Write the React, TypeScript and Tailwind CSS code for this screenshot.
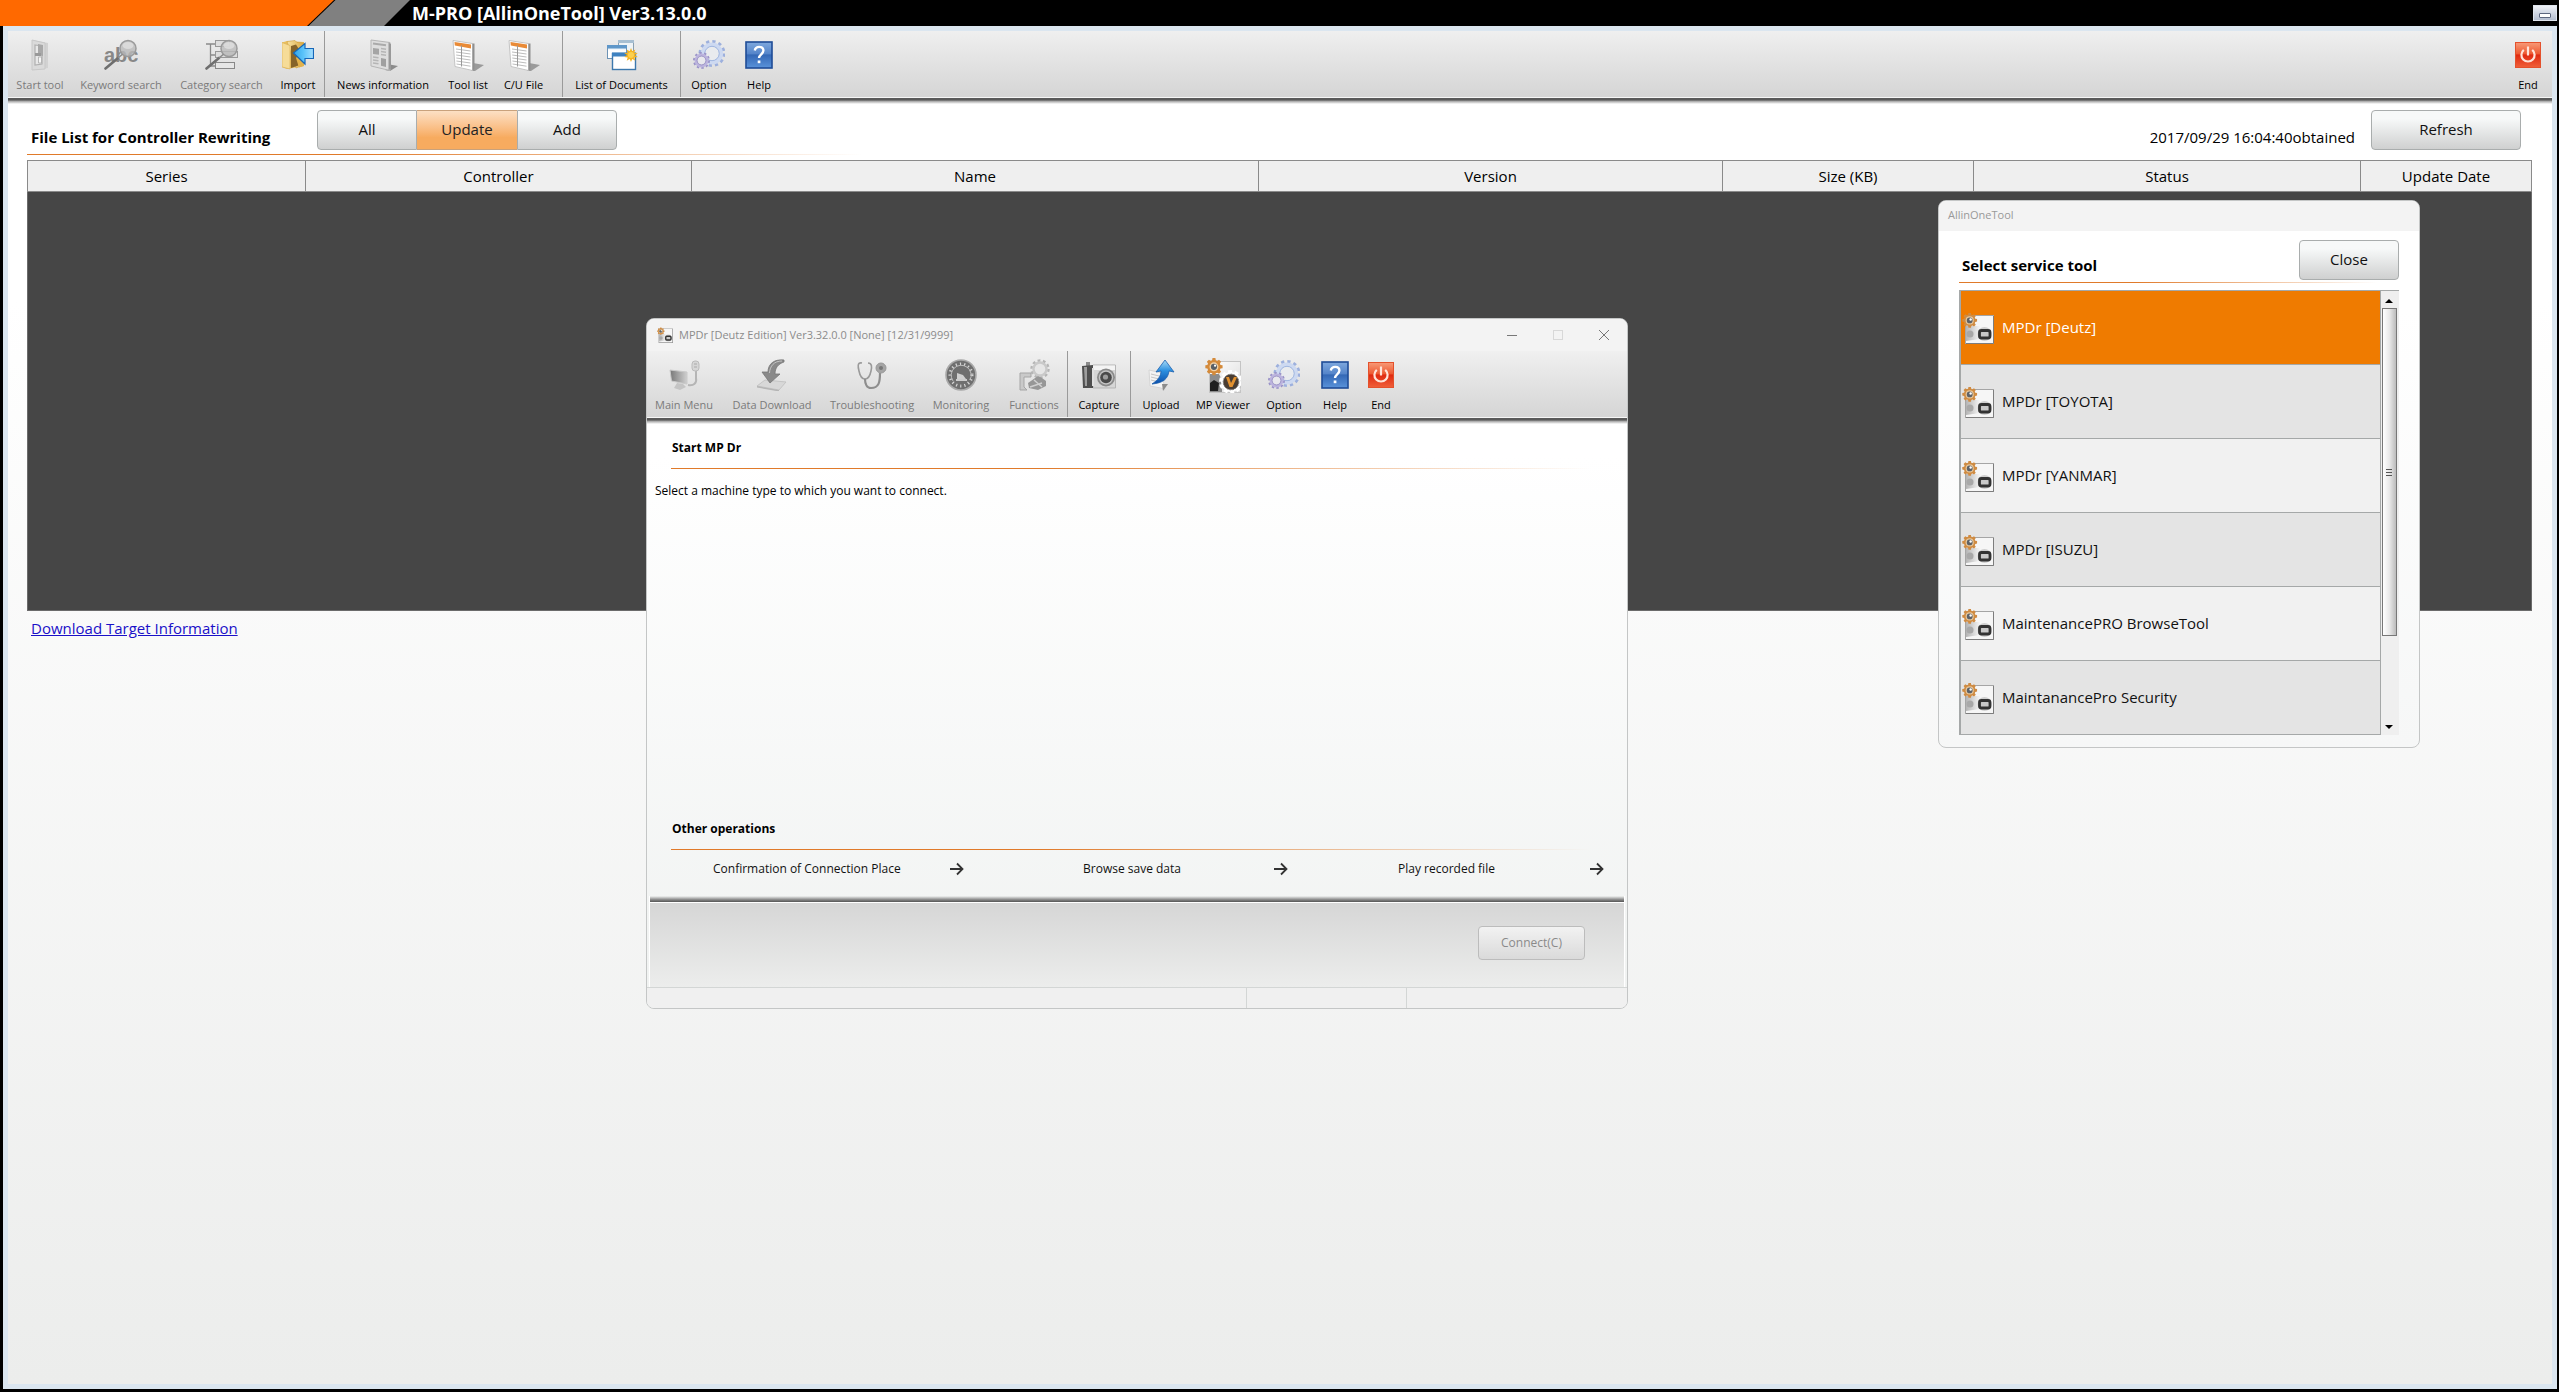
import type { ReactNode } from "react";

const GEAR =
  "M13.4 2h5.2l.7 3.7 2.6 1.1 3.1-2.1 3.7 3.7-2.1 3.1 1.1 2.6 3.7.7v5.2l-3.7.7-1.1 2.6 2.1 3.1-3.7 3.7-3.1-2.1-2.6 1.1-.7 3.7h-5.2l-.7-3.7-2.6-1.1L7 30.1l-3.7-3.7 2.1-3.1-1.1-2.6L.6 20v-5.2l3.7-.7 1.1-2.6-2.1-3.1L7 4.700l3.1 2.100 2.600-1.100z";

function Svg({ children }: { children: ReactNode }) {
  return (
    <svg className="size-8 shrink-0" viewBox="0 0 32 32" aria-hidden="true">
      {children}
    </svg>
  );
}

const Defs = () => (
  <svg className="absolute size-0" aria-hidden="true">
    <defs>
      <linearGradient id="gBlue" x1="0" y1="0" x2="0" y2="1">
        <stop offset="0" stopColor="#7fa9de" />
        <stop offset="0.45" stopColor="#5585ca" />
        <stop offset="0.5" stopColor="#3468b6" />
        <stop offset="1" stopColor="#5a93da" />
      </linearGradient>
      <linearGradient id="gRed" x1="0" y1="0" x2="0" y2="1">
        <stop offset="0" stopColor="#f79a78" />
        <stop offset="0.45" stopColor="#ee5a32" />
        <stop offset="0.5" stopColor="#e02a10" />
        <stop offset="1" stopColor="#f0603a" />
      </linearGradient>
      <linearGradient id="gArrow" x1="0" y1="0" x2="1" y2="0">
        <stop offset="0" stopColor="#2fa4ea" />
        <stop offset="0.5" stopColor="#5cc4fa" />
        <stop offset="1" stopColor="#a8e0ff" />
      </linearGradient>
      <linearGradient id="gUp" x1="0" y1="0" x2="0" y2="1">
        <stop offset="0" stopColor="#a9dcf7" />
        <stop offset="0.45" stopColor="#2b8fe0" />
        <stop offset="1" stopColor="#0c4da8" />
      </linearGradient>
      <linearGradient id="gFolder" x1="0" y1="0" x2="1" y2="0">
        <stop offset="0" stopColor="#f8e3a4" />
        <stop offset="1" stopColor="#d9a740" />
      </linearGradient>
      <linearGradient id="gWin" x1="0" y1="0" x2="0" y2="1">
        <stop offset="0" stopColor="#c9def0" />
        <stop offset="0.4" stopColor="#ffffff" />
      </linearGradient>
      <linearGradient id="gCard" x1="0" y1="0" x2="1" y2="1">
        <stop offset="0" stopColor="#ffffff" />
        <stop offset="1" stopColor="#dcdcdc" />
      </linearGradient>
      <linearGradient id="gShade" x1="0" y1="0" x2="1" y2="0">
        <stop offset="0" stopColor="#777777" />
        <stop offset="1" stopColor="#cfcfcf" />
      </linearGradient>
      <linearGradient id="gSide" x1="0" y1="0" x2="1" y2="0">
        <stop offset="0" stopColor="#b4b4b4" />
        <stop offset="1" stopColor="#f6f6f6" />
      </linearGradient>
    </defs>
  </svg>
);

const StartToolIcon = () => (
  <Svg>
    <path d="M8 1l16 3v25l-16 2z" fill="#d2d2d2" />
    <path d="M8 1l13 3v26l-13 1z" fill="#dadada" stroke="#c8c8c8" />
    <path d="M11 6l7 1v18l-7 1z" fill="#e8e8e8" stroke="#b0b0b0" strokeWidth="1.200" />
    <path d="M14 5l5 1v11l-5-1z" fill="#a8a8a8" />
    <path d="M11 14h6v3h-6z" fill="#999" />
    <path d="M14.500 18h3v6h-3z" fill="#f5f5f5" stroke="#aaa" strokeWidth="0.800" />
  </Svg>
);

const Magnifier = () => (
  <>
    <path d="M1.500 29.500L14 19" stroke="#6f6f6f" strokeWidth="2.600" strokeLinecap="round" />
    <circle cx="24" cy="9.500" r="8" fill="#b9b9b9" fillOpacity="0.800" stroke="#9a9a9a" strokeWidth="1.500" />
    <ellipse cx="24" cy="6.500" rx="5.500" ry="3.500" fill="#e0e0e0" fillOpacity="0.800" />
    <path d="M14 19l4.500-3.800" stroke="#8a8a8a" strokeWidth="1.500" />
  </>
);

const KeywordIcon = () => (
  <svg className="h-8 w-[34px] shrink-0" viewBox="0 0 34 32" aria-hidden="true">
    <text x="0" y="23" fontSize="20" fontWeight="700" fontFamily="Liberation Sans, sans-serif" fill="#888">
      abc
    </text>
    <Magnifier />
  </svg>
);

const CategoryIcon = () => (
  <svg className="h-8 w-[34px] shrink-0" viewBox="0 0 34 32" aria-hidden="true">
    <path d="M1 5h9M5.500 5v22h5M5.500 16h5" fill="none" stroke="#8a8a8a" strokeWidth="1.300" />
    <rect x="10.500" y="1.500" width="14" height="6" fill="#ddd" stroke="#999" />
    <rect x="10.500" y="12.500" width="22" height="6" fill="#ddd" stroke="#999" />
    <rect x="10.500" y="23.500" width="19" height="6" fill="#e6e6e6" stroke="#888" />
    <Magnifier />
  </svg>
);

const ImportIcon = () => (
  <Svg>
    <path d="M0 3.500l5-1.500 17 1v24l-17 3-5-2z" fill="#eabf5c" />
    <path d="M5 2.500l8-1 2 2 7 .5v22l-8 3z" fill="url(#gFolder)" stroke="#cf9f43" strokeWidth="0.600" />
    <path d="M0 3.500l8 3v23.500l-8-2z" fill="#f6dc98" stroke="#d9ac52" strokeWidth="0.600" />
    <path d="M9 7l5-1.500 2.500 4v17L9 29z" fill="#86642a" />
    <path d="M14 19l3-4 5 6v6l-5 1.500z" fill="#e2b24c" />
    <path d="M11.500 14L23 4.500V9.500h8.500v10H23V25z" fill="url(#gArrow)" stroke="#1767b8" strokeWidth="1.200" />
  </Svg>
);

const NewsIcon = () => (
  <Svg>
    <path d="M20 25l11 2-8 5-5-1z" fill="#8b8b8b" />
    <path d="M4 1l19 2.500v28L4 27z" fill="#dedede" stroke="#b5b5b5" />
    <path d="M21.500 3.500L24 5v25l-2.500 1z" fill="#999" />
    <path d="M6 4.500l13 1.700" stroke="#aaa" strokeWidth="2" />
    <path d="M6 9l6 .8v6L6 15z" fill="#a5a5a5" />
    <path
      d="M14 9.500l5 .7M14 12.500l5 .7M14 15.500l5 .7M6 18l5.500.8M6 21l5.500.8M6 24l5.500.8"
      stroke="#b5b5b5"
      strokeWidth="1.400"
    />
    <path d="M14 19l5 1v8l-5-1.200z" fill="#a0a0a0" />
  </Svg>
);

const ListIcon = () => (
  <Svg>
    <path d="M21 24l11 2-9 6h-4z" fill="#9a9a9a" />
    <path d="M1 1.500l19.500 3v27L3 27.500z" fill="#fff" stroke="#c4c4c4" />
    <path d="M20.500 4.500h2V30l-2 1.500z" fill="#8f8f8f" />
    <path d="M2.500 3l16.500 2.500v4L2.800 6.500z" fill="#e98a36" />
    <path
      d="M4 10l14.500 2M4 13l14.500 2M4.200 16l14.300 2M4.300 19l14.200 2M4.400 22l14 2M4.500 25l14 2.200"
      stroke="#bdbdbd"
    />
    <path d="M9.500 6.500v21" stroke="#999" />
  </Svg>
);

const DocumentsIcon = () => (
  <Svg>
    <rect x="12.500" y="1.500" width="15" height="11" fill="#eef3f6" stroke="#8aa0b0" />
    <rect x="12" y="1" width="16" height="3" fill="#a7bfd2" />
    <rect x="1.500" y="6.500" width="19" height="13" fill="url(#gWin)" stroke="#6d93b5" />
    <rect x="1" y="6" width="20" height="3.500" fill="#5f97c9" />
    <rect x="6.500" y="14.500" width="23" height="16" fill="#fff" stroke="#3c78ad" strokeWidth="1.400" />
    <rect x="6" y="13.500" width="24" height="4" fill="#3f82c0" />
    <path
      d="M25 9l1.300 3.200 3-1.800-1 3.300 3.500.3-3 2 3 2-3.500.5 1 3.300-3-1.800L25 23l-1.300-3-3 1.800 1-3.300-3.500-.5 3-2-3-2 3.500-.3-1-3.300 3 1.800z"
      fill="#f6b421"
    />
    <circle cx="25" cy="16" r="3" fill="#fbd04e" />
  </Svg>
);

const OptionIcon = () => (
  <Svg>
    <circle cx="19" cy="14.500" r="12" fill="none" stroke="#9db0dd" strokeWidth="3" strokeDasharray="3.200 3.080" />
    <circle cx="19" cy="14.500" r="9" fill="none" stroke="#cdd9f1" strokeWidth="4" />
    <circle cx="19" cy="14.500" r="7.200" fill="#e9ebee" stroke="#8ea8da" strokeWidth="0.800" />
    <circle cx="8.500" cy="21.500" r="7.500" fill="none" stroke="#9a93c8" strokeWidth="2" strokeDasharray="2.400 2.310" />
    <circle cx="8.500" cy="21.500" r="5.600" fill="none" stroke="#bcb4de" strokeWidth="2.600" />
    <circle cx="8.500" cy="21.500" r="4.400" fill="#e8e8ed" stroke="#8d84bd" strokeWidth="0.800" />
  </Svg>
);

const HelpIcon = () => (
  <Svg>
    <rect x="3" y="3" width="26" height="26" fill="url(#gBlue)" stroke="#1f4c96" strokeWidth="1.600" />
    <path
      d="M11.800 11.500c.4-2.400 2.100-3.600 4.400-3.600 2.400 0 4.200 1.400 4.200 3.700 0 3.600-4.400 3.800-4.400 7.400"
      fill="none"
      stroke="#fff"
      strokeWidth="2.400"
    />
    <rect x="14.700" y="21.500" width="2.700" height="2.700" fill="#fff" />
  </Svg>
);

const EndIcon = () => (
  <Svg>
    <rect x="3.500" y="3.500" width="25" height="25" fill="url(#gRed)" stroke="#e4512c" />
    <path d="M11.800 10.800a6.600 6.600 0 1 0 8.400 0" fill="none" stroke="#ffe4da" strokeWidth="2.200" />
    <path d="M16 7.500v9" stroke="#ffe4da" strokeWidth="2.200" />
  </Svg>
);

const MainMenuIcon = () => (
  <Svg>
    <path d="M2 11l17 2v12L3.500 22z" fill="url(#gShade)" stroke="#c9c9c9" />
    <path d="M9 24l6 1 3 3-6 3-6-2z" fill="#c4c4c4" />
    <path d="M20 26c6 1 9-2 8-7V11" fill="none" stroke="#b5b5b5" strokeWidth="2" />
    <rect x="24" y="2" width="7" height="10" rx="3" fill="#d6d6d6" stroke="#bbb" />
    <path d="M26 5h3M26 8h3" stroke="#aaa" />
  </Svg>
);

const DownloadIcon = () => (
  <Svg>
    <path d="M1 27l8-6 21 2-7 8z" fill="#d8d8d8" stroke="#c4c4c4" />
    <path d="M1 27l22 4v1.500L1 28.500z" fill="#b5b5b5" />
    <path d="M28 1C18 0 12 5 12 13H6l8 11 10-9h-5c0-6 3-10 9-12z" fill="#8a8a8a" stroke="#777" strokeWidth="0.800" />
    <path d="M26 2c-8 0-12 5-12.500 12" fill="none" stroke="#c4c4c4" />
  </Svg>
);

const StethoscopeIcon = () => (
  <Svg>
    <path
      d="M6 4c-5-1-4 4-3 8 1 5 3 8 6 8s5-3 6-8c1-4 1-8-3-8"
      fill="none"
      stroke="#9a9a9a"
      strokeWidth="1.600"
    />
    <path d="M9 20c0 5 2 9 6 9 8 0 9-6 9-15" fill="none" stroke="#8e8e8e" strokeWidth="2.200" />
    <circle cx="25" cy="9" r="5" fill="#a5a5a5" stroke="#999" />
    <circle cx="25" cy="9" r="2" fill="#777" />
  </Svg>
);

const MonitorIcon = () => (
  <Svg>
    <circle cx="16" cy="16" r="15" fill="#6f6f6f" stroke="#a9a9a9" strokeWidth="1.600" />
    <circle cx="16" cy="16" r="11" fill="none" stroke="#d5d5d5" strokeWidth="3" strokeDasharray="1.200 3" />
    <path d="M8 22a10 10 0 1 1 17-1" fill="none" stroke="#bbb" />
    <path d="M12 14l6 2 3 4H12z" fill="#d0d0d0" />
    <path d="M11 21h11" stroke="#ccc" strokeWidth="2" />
  </Svg>
);

const FunctionsIcon = () => (
  <Svg>
    <circle cx="22" cy="10" r="8.500" fill="none" stroke="#b5b5b5" strokeWidth="2.400" strokeDasharray="2.800 2.540" />
    <circle cx="22" cy="10" r="6.500" fill="#e6e6e6" stroke="#c9c9c9" strokeWidth="2.400" />
    <path d="M2 31V14h11v4H6v10l3 3z" fill="#c9c9c9" stroke="#a5a5a5" />
    <path d="M10 24l10-7 4 2 4 3v5l-8 4-9-2z" fill="#979797" />
    <path d="M12 28l12-4M16 21l8 7" stroke="#d0d0d0" strokeWidth="1.500" />
  </Svg>
);

const CaptureIcon = () => (
  <svg className="h-8 w-9 shrink-0" viewBox="0 0 36 32" aria-hidden="true">
    <path d="M5 3h4v4H5z" fill="#8a8a8a" />
    <path d="M12 6h22.500v23H12z" fill="#d6d6d6" stroke="#b5b5b5" />
    <path d="M12 6.500h22v4.500H12z" fill="#f4f4f4" />
    <path d="M1 7l11-1v23H2z" fill="#4f4f4f" />
    <path d="M3 8h3v19H4z" fill="#9d9d9d" />
    <path d="M11 9h2v18h-2z" fill="#e0e0e0" />
    <circle cx="25" cy="18.500" r="9" fill="#8a8a8a" />
    <circle cx="25" cy="18.500" r="7.200" fill="#c4c4c4" />
    <circle cx="25" cy="18.500" r="5.800" fill="#4a4a4a" />
    <circle cx="24.500" cy="18" r="2.600" fill="#9d9d9d" />
  </svg>
);

const UploadIcon = () => (
  <Svg>
    <path d="M4 11l13 3 3 17-4-2-11-2z" fill="#f4f4f4" stroke="#d5d5d5" />
    <path d="M6 15l8 2M6 18l8 2M6 21l8 2" stroke="#c4c4c4" />
    <path d="M17 25h6l-5 7z" fill="#8c8c8c" />
    <path d="M20 1l9 12-5-1c-1 8-6 12-17 13 6-4 9-8 9-13l-5 1z" fill="url(#gUp)" stroke="#1a5fae" strokeWidth="0.800" />
  </Svg>
);

const ViewerIcon = () => (
  <svg className="h-9 w-9 shrink-0" viewBox="0 0 36 36" aria-hidden="true">
    <rect x="4.500" y="4.500" width="31" height="31" fill="url(#gCard)" stroke="#c4c4c4" />
    <path d="M5 17h9l3 6v12H5z" fill="#8c8c8c" />
    <path d="M5 26l4-3 5 3-1 8H5z" fill="#1e1e1e" />
    <circle cx="26" cy="25" r="10.500" fill="none" stroke="#fff" strokeWidth="3" strokeDasharray="4 2.600" />
    <circle cx="26" cy="25" r="10" fill="#fff" />
    <circle cx="26" cy="25" r="7.800" fill="#4a3d32" stroke="#777" strokeDasharray="2 1" />
    <path d="M21 20h3l2 6 3-6h3l-4.500 10h-3z" fill="#e2912f" />
    <g transform="scale(0.56)">
      <path d={GEAR} fill="#d48a3a" />
      <circle cx="16" cy="17.500" r="8" fill="#f0cfa4" />
      <circle cx="16" cy="17.500" r="5.500" fill="#5a6066" />
      <circle cx="18" cy="15.500" r="2" fill="#fff" />
    </g>
  </svg>
);

function ToolIcon({ className }: { className: string }) {
  return (
    <svg className={className} viewBox="0 0 32 32" aria-hidden="true">
      <rect x="3.500" y="3.500" width="28" height="28" fill="#f6f6f6" stroke="#a5a5a5" />
      <path d="M4 14h14v13l-14 2z" fill="url(#gSide)" />
      <path d="M4 31.500h27.500V4" fill="none" stroke="#7d7d7d" />
      <circle cx="8" cy="22" r="3.500" fill="#a8a8a8" />
      <circle cx="22.500" cy="22" r="7" fill="#cfcfcf" />
      <rect x="17.500" y="18.500" width="10.500" height="7.500" rx="2" fill="#c9c9c9" stroke="#333" strokeWidth="2.800" />
      <g transform="scale(0.480)">
        <path d={GEAR} fill="#cf8b42" />
        <circle cx="16" cy="17.500" r="8.500" fill="#e6c79c" />
        <circle cx="16" cy="17.500" r="6" fill="#5d6268" />
        <circle cx="18" cy="15.500" r="2.500" fill="#fff" />
      </g>
    </svg>
  );
}

type Tool = { label: string; icon: ReactNode; width: string; disabled?: boolean };

function ToolButton({ label, icon, width, disabled }: Tool) {
  return (
    <button
      type="button"
      disabled={disabled}
      className={`flex shrink-0 flex-col items-center pt-1.5 text-black disabled:text-[#7b7b7b] ${width}`}
    >
      <span className="flex h-9 items-center justify-center">{icon}</span>
      <span className="mt-0.5 text-[11px] leading-5 whitespace-nowrap">{label}</span>
    </button>
  );
}

const Separator = ({ className = "" }: { className?: string }) => (
  <div className={`w-px shrink-0 bg-[#9a9a9a] ${className}`} />
);

const BarShadow = () => (
  <div className="h-[7px] shrink-0 border-t border-[#f6f6f6] bg-linear-to-b from-[#5a5a5a] from-35% via-[#a0a0a0] via-50% to-transparent" />
);

const softButton =
  "border border-[#a9adad] bg-linear-to-b from-[#f7f9f9] from-20% to-[#cfd0d0] pb-0.5 text-[15px] text-[#111]";

const columns = [
  { label: "Series", width: "w-[278px]" },
  { label: "Controller", width: "w-[386px]" },
  { label: "Name", width: "w-[567px]" },
  { label: "Version", width: "w-[464px]" },
  { label: "Size (KB)", width: "w-[251px]" },
  { label: "Status", width: "w-[387px]" },
  { label: "Update Date", width: "w-auto" },
];

const services = [
  "MPDr [Deutz]",
  "MPDr [TOYOTA]",
  "MPDr [YANMAR]",
  "MPDr [ISUZU]",
  "MaintenancePRO BrowseTool",
  "MaintanancePro Security",
];

const operations = [
  { label: "Confirmation of Connection Place", width: "w-[287px] pl-9" },
  { label: "Browse save data", width: "w-[324px] pl-[119px]" },
  { label: "Play recorded file", width: "w-[316px] pl-[110px]" },
];

const Arrow = () => (
  <svg className="h-3.5 w-3.5" viewBox="0 0 14 14" aria-hidden="true">
    <path d="M0 7h12M7 1.500L12.500 7 7 12.500" fill="none" stroke="#333" strokeWidth="1.800" />
  </svg>
);

const Rule = ({ className = "" }: { className?: string }) => (
  <div className={`h-px bg-linear-to-r from-[#e07a2a] from-40% to-transparent ${className}`} />
);

function MachineWindow() {
  return (
    <section
      aria-label="MPDr"
      className="absolute top-[318px] left-[646px] w-[982px] overflow-hidden rounded-lg border border-[#c4c6c6] bg-linear-to-b from-white from-20% to-[#f0f2f1]"
    >
      <header className="flex h-8 items-center bg-[#f3f3f3] pr-[17px] pl-2.5 text-[11px] text-[#8b8b8b]">
        <ToolIcon className="mr-1.5 size-4" />
        <span className="grow">MPDr [Deutz Edition] Ver3.32.0.0 [None] [12/31/9999]</span>
        <div className="flex items-center gap-[34px]">
          <button type="button" aria-label="Minimize">
            <svg className="size-3" viewBox="0 0 12 12">
              <path d="M1 6.500h10" stroke="#777" />
            </svg>
          </button>
          <button type="button" aria-label="Maximize" disabled>
            <svg className="size-3" viewBox="0 0 12 12">
              <rect x="1.500" y="1.500" width="9" height="9" fill="none" stroke="#d8d8d8" />
            </svg>
          </button>
          <button type="button" aria-label="Close window">
            <svg className="size-3" viewBox="0 0 12 12">
              <path d="M1 1l10 10M11 1L1 11" stroke="#777" />
            </svg>
          </button>
        </div>
      </header>
      <nav className="flex h-[66px] bg-linear-to-b from-[#f0f0f0] to-[#d5d5d5]">
        <ToolButton label="Main Menu" icon={<MainMenuIcon />} width="w-[74px]" disabled />
        <ToolButton label="Data Download" icon={<DownloadIcon />} width="w-[102px]" disabled />
        <ToolButton label="Troubleshooting" icon={<StethoscopeIcon />} width="w-[98px]" disabled />
        <ToolButton label="Monitoring" icon={<MonitorIcon />} width="w-20" disabled />
        <ToolButton label="Functions" icon={<FunctionsIcon />} width="w-[66px]" disabled />
        <Separator />
        <ToolButton label="Capture" icon={<CaptureIcon />} width="w-[62px]" />
        <Separator />
        <ToolButton label="Upload" icon={<UploadIcon />} width="w-[60px]" />
        <ToolButton label="MP Viewer" icon={<ViewerIcon />} width="w-16" />
        <ToolButton label="Option" icon={<OptionIcon />} width="w-[58px]" />
        <ToolButton label="Help" icon={<HelpIcon />} width="w-11" />
        <ToolButton label="End" icon={<EndIcon />} width="w-12" />
      </nav>
      <BarShadow />
      <div className="px-2 pt-3">
        <h2 className="ml-[17px] pb-2 text-[12px] leading-6 font-bold">Start MP Dr</h2>
        <Rule className="mr-7 ml-4" />
        <p className="pt-2.5 text-[12px] leading-6">Select a machine type to which you want to connect.</p>
        <h2 className="mt-[314px] ml-[17px] pb-2 text-[12px] leading-6 font-bold">Other operations</h2>
        <Rule className="mr-7 ml-4" />
        <ul className="ml-[22px] flex pt-[7px] pb-[15px]">
          {operations.map((op) => (
            <li key={op.label}>
              <button
                type="button"
                className={`flex items-center justify-between text-[12px] leading-6 text-[#111] ${op.width}`}
              >
                {op.label}
                <Arrow />
              </button>
            </li>
          ))}
        </ul>
      </div>
      <footer className="mx-0.5 border-x border-white">
        <div className="h-[7px] border-b border-white bg-linear-to-b from-transparent via-[#8a8a8a] via-60% to-[#555]" />
        <div className="flex h-[84px] items-start justify-end bg-linear-to-b from-[#d6d6d6] to-[#ecedec] pt-[23px] pr-[39px]">
          <button
            type="button"
            disabled
            className="h-[34px] w-[107px] rounded border border-[#bcbcbc] bg-linear-to-b from-[#f2f2f2] to-[#dadada] text-[12px] text-[#8a8a8a]"
          >
            Connect(C)
          </button>
        </div>
      </footer>
      <div className="flex h-[21px] border-t border-[#d3d6d5] bg-[#f0f0f0]">
        <div className="w-[600px] border-r border-[#d3d6d5]" />
        <div className="w-40 border-r border-[#d3d6d5]" />
      </div>
    </section>
  );
}

function ServiceDialog() {
  return (
    <section
      aria-label="Select service tool"
      className="absolute top-[200px] left-[1938px] w-[482px] overflow-hidden rounded-lg border border-[#c4c6c6] bg-linear-to-b from-white from-20% to-[#f6f7f7]"
    >
      <header className="h-[30px] bg-[#f3f3f3] px-[9px] text-[11px] leading-7 text-[#999]">AllinOneTool</header>
      <div className="px-5 pt-[9px] pb-3">
        <div className="flex h-10 items-end justify-between">
          <h2 className="pb-[3px] pl-[3px] text-[15px] leading-6 font-bold">Select service tool</h2>
          <button type="button" className={`h-10 w-[100px] rounded ${softButton}`}>
            Close
          </button>
        </div>
        <Rule className="mt-0.5 mb-[7px] to-95%" />
        <div className="flex border-t border-[#a5a8a8]">
          <ul className="grow border-l-2 border-[#a5a8a8]">
            {services.map((name, i) => (
              <li key={name} className="border-r border-b border-[#a5a8a8]">
                <button
                  type="button"
                  className={`flex h-[73px] w-full items-center gap-2 pr-0.5 pl-px text-[15px] ${
                    i === 0 ? "bg-[#ef7b00] text-white" : i % 2 ? "bg-[#e4e4e4] text-[#111]" : "bg-[#f1f1f1] text-[#111]"
                  }`}
                >
                  <ToolIcon className="size-8" />
                  {name}
                </button>
              </li>
            ))}
          </ul>
          <div className="flex w-[18px] flex-col items-center bg-[#efefef] pr-0.5">
            <svg className="h-[17px] w-2" viewBox="0 0 8 17" aria-hidden="true">
              <path d="M4 8l4 4H0z" fill="#000" />
            </svg>
            <div className="flex h-[328px] w-[15px] flex-col items-center justify-center gap-0.5 border border-[#777] bg-linear-to-r from-white via-[#e8e8e8] via-50% to-[#bbb]">
              <span className="h-px w-1.5 bg-[#555]" />
              <span className="h-px w-1.5 bg-[#555]" />
              <span className="h-px w-1.5 bg-[#555]" />
            </div>
            <svg className="mt-auto h-[18px] w-2" viewBox="0 0 8 18" aria-hidden="true">
              <path d="M4 12l4-4H0z" fill="#000" />
            </svg>
          </div>
        </div>
      </div>
    </section>
  );
}

export default function App() {
  return (
    <div className="relative flex min-h-screen flex-col bg-black pb-[3px] font-['Open_Sans','Noto_Sans',sans-serif] text-black">
      <Defs />
      <header className="flex h-[26px] items-center">
        <svg className="h-[26px] w-[412px] shrink-0" viewBox="0 0 412 26" aria-hidden="true">
          <path d="M0 0h334l-27 26H0z" fill="#ff6900" />
          <path d="M335.500 0H410l-26 26h-75.500z" fill="#808080" />
        </svg>
        <h1 className="grow pb-px text-[18px] leading-6 font-bold text-white">M-PRO [AllinOneTool] Ver3.13.0.0</h1>
        <button
          type="button"
          aria-label="Minimize"
          className="mr-0.5 flex h-4 w-6 items-center justify-center border border-[#dfe5ee] bg-linear-to-b from-[#eef1f7] to-[#b4bed0]"
        >
          <span className="mt-1 h-[5px] w-3 rounded-[1px] border border-[#5d6880] bg-white" />
        </button>
      </header>

      <div className="mr-0.5 ml-[3px] flex grow flex-col border-5 border-[#dbe6f0] bg-linear-to-b from-white from-20% to-[#ecedec]">
        <nav className="flex h-[66px] bg-linear-to-b from-[#efefef] to-[#d5d5d5]">
          <ToolButton label="Start tool" icon={<StartToolIcon />} width="w-16" disabled />
          <ToolButton label="Keyword search" icon={<KeywordIcon />} width="w-[98px]" disabled />
          <ToolButton label="Category search" icon={<CategoryIcon />} width="w-[103px]" disabled />
          <ToolButton label="Import" icon={<ImportIcon />} width="w-[50px]" />
          <Separator className="ml-px" />
          <ToolButton label="News information" icon={<NewsIcon />} width="w-[116px]" />
          <ToolButton label="Tool list" icon={<ListIcon />} width="w-[54px]" />
          <ToolButton label="C/U File" icon={<ListIcon />} width="w-[57px]" />
          <Separator className="ml-2.5" />
          <ToolButton label="List of Documents" icon={<DocumentsIcon />} width="w-[117px]" />
          <Separator />
          <ToolButton label="Option" icon={<OptionIcon />} width="w-14" />
          <ToolButton label="Help" icon={<HelpIcon />} width="w-11" />
          <div className="grow" />
          <ToolButton label="End" icon={<EndIcon />} width="w-12" />
        </nav>
        <BarShadow />

        <main className="pr-5 pl-[19px]">
          <div className="flex items-end pt-1.5">
            <h2 className="w-[290px] pb-px pl-1 text-[15px] leading-6 font-bold">File List for Controller Rewriting</h2>
            <div className="flex">
              <button type="button" className={`h-10 w-[100px] rounded-l ${softButton}`}>
                All
              </button>
              <button
                type="button"
                aria-pressed="true"
                className="h-10 w-[100px] border-y border-[#c9a27c] bg-linear-to-b from-[#fce0c4] to-[#f7ab5f] to-70% pb-0.5 text-[15px] text-[#222]"
              >
                Update
              </button>
              <button type="button" className={`h-10 w-[100px] rounded-r ${softButton}`}>
                Add
              </button>
            </div>
            <p className="ml-auto pb-px text-[15px] leading-6">2017/09/29 16:04:40obtained</p>
            <button type="button" className={`mr-[11px] ml-4 h-10 w-[150px] rounded ${softButton}`}>
              Refresh
            </button>
          </div>
          <Rule className="mt-1 mb-[5px] w-1/3" />
          <table className="w-full table-fixed border-collapse border border-[#6b6b6b]">
            <thead>
              <tr>
                {columns.map((c) => (
                  <th
                    key={c.label}
                    scope="col"
                    className={`h-[31px] border border-[#8a8a8a] bg-[#efefef] text-[15px] leading-6 font-normal ${c.width}`}
                  >
                    {c.label}
                  </th>
                ))}
              </tr>
            </thead>
            <tbody>
              <tr>
                <td colSpan={7} className="h-[419px] bg-[#464646]" />
              </tr>
            </tbody>
          </table>
          <a href="#targets" className="mt-[5px] ml-1 inline-block text-[15px] leading-6 text-[#1a10c8] underline">
            Download Target Information
          </a>
        </main>
      </div>

      <MachineWindow />
      <ServiceDialog />
    </div>
  );
}
